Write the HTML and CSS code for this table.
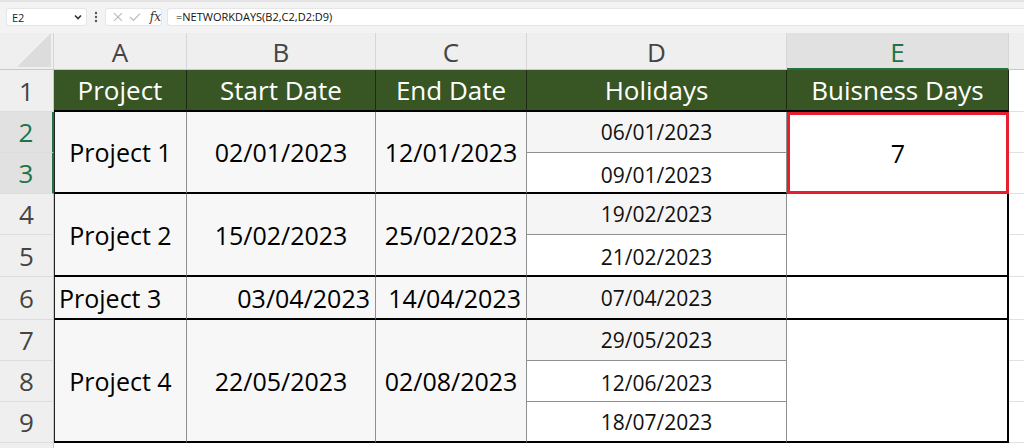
FILE: index.html
```html
<!DOCTYPE html>
<html>
<head>
<meta charset="utf-8">
<link rel="stylesheet" href="styles.css">
</head>
<body>
<div class="app">
  <div class="fbar">
    <div class="namebox">
      <span>E2</span>
      <svg class="chev" width="8" height="6" viewBox="0 0 8 6"><path d="M1 1.5 L4 4.5 L7 1.5" fill="none" stroke="#333" stroke-width="1.6"/></svg>
    </div>
    <div class="dots">
      <svg width="4" height="12" viewBox="0 0 4 12"><circle cx="2" cy="2" r="1.2" fill="#555"/><circle cx="2" cy="6" r="1.2" fill="#555"/><circle cx="2" cy="10" r="1.2" fill="#555"/></svg>
    </div>
    <div class="btns">
      <svg width="10" height="10" viewBox="0 0 10 10"><path d="M1 1 L9 9 M9 1 L1 9" stroke="#b9b9b9" stroke-width="1.1" fill="none"/></svg>
      <svg width="12" height="10" viewBox="0 0 12 10"><path d="M1 5 L4.5 8.5 L11 1.5" stroke="#b9b9b9" stroke-width="1.1" fill="none"/></svg>
      <span class="fx">fx</span>
    </div>
    <div class="formula">=NETWORKDAYS(B2,C2,D2:D9)</div>
  </div>

  <div class="sheet">
    <div class="corner"><div class="tri"></div></div>
    <div class="ch">A</div>
    <div class="ch">B</div>
    <div class="ch">C</div>
    <div class="ch">D</div>
    <div class="ch ch-sel">E</div>
    <div class="ch ch-f"></div>

    <div class="rh">1</div>
    <div class="th">Project</div>
    <div class="th">Start Date</div>
    <div class="th">End Date</div>
    <div class="th">Holidays</div>
    <div class="th">Buisness Days</div>
    <div class="f"></div>

    <div class="rh rh-sel">2</div>
    <div class="c ca span2 tb">Project 1</div>
    <div class="c span2 tb">02/01/2023</div>
    <div class="c span2 tb">12/01/2023</div>
    <div class="c cd gray">06/01/2023</div>
    <div class="c ce span2 tb sel">7</div>
    <div class="f"></div>

    <div class="rh rh-sel">3</div>
    <div class="c cd white tb low">09/01/2023</div>
    <div class="f"></div>

    <div class="rh">4</div>
    <div class="c ca span2 tb">Project 2</div>
    <div class="c span2 tb">15/02/2023</div>
    <div class="c span2 tb">25/02/2023</div>
    <div class="c cd gray">19/02/2023</div>
    <div class="c ce span2 tb"></div>
    <div class="f"></div>

    <div class="rh">5</div>
    <div class="c cd white tb low">21/02/2023</div>
    <div class="f"></div>

    <div class="rh">6</div>
    <div class="c ca tb left">Project 3</div>
    <div class="c tb right">03/04/2023</div>
    <div class="c tb right">14/04/2023</div>
    <div class="c cd gray tb">07/04/2023</div>
    <div class="c ce tb"></div>
    <div class="f"></div>

    <div class="rh">7</div>
    <div class="c ca span3 tb">Project 4</div>
    <div class="c span3 tb">22/05/2023</div>
    <div class="c span3 tb">02/08/2023</div>
    <div class="c cd gray">29/05/2023</div>
    <div class="c ce span3 tb"></div>
    <div class="f"></div>

    <div class="rh">8</div>
    <div class="c cd white low">12/06/2023</div>
    <div class="f"></div>

    <div class="rh">9</div>
    <div class="c cd white tb">18/07/2023</div>
    <div class="f"></div>

    <div class="rh rh-last"></div>
    <div class="rest"></div>
  </div>
</div>
</body>
</html>
```
FILE: styles.css
```css
* { box-sizing: border-box; }
html, body { margin: 0; padding: 0; }
body { font-family: "Open Sans", "Noto Sans", sans-serif; background: #f3f3f3; }

.app { width: 1024px; height: 448px; overflow: hidden; background: #f3f3f3; }

.fbar {
  height: 33px;
  display: flex;
  align-items: flex-start;
  padding: 6px 0 0 6px;
  border-top: 2px solid #e4e4e4;
}
.namebox {
  width: 81px; height: 18px;
  background: #fff;
  border: 1px solid #e6e6e6;
  border-radius: 3px;
  display: flex; align-items: center; justify-content: space-between;
  padding: 0 4px 0 5px;
  font-size: 11px; color: #222;
}
.dots { width: 18px; height: 18px; display: flex; align-items: center; justify-content: center; }
.btns {
  width: 57px; height: 18px;
  background: #fff;
  border: 1px solid #e6e6e6;
  border-radius: 3px;
  display: flex; align-items: center;
  padding-left: 7px; gap: 6px;
}
.fx { font-family: "DejaVu Serif", "Liberation Serif", serif; font-style: italic; font-size: 12px; color: #333; margin-left: 3px; }
.formula {
  flex: 1; height: 18px; margin-left: 5px;
  background: #fff;
  border: 1px solid #e6e6e6; border-right: none;
  border-radius: 3px 0 0 3px;
  font-size: 11px; color: #111;
  padding-left: 8px; line-height: 16px;
}

.sheet {
  display: grid;
  grid-template-columns: 54px 133px 189px 151px 260px 222px 1fr;
  grid-template-rows: 37px 42px 41px 41px 41px 42px 43px 41px 41px 41px 1fr;
  height: 415px;
}

.corner { background: #efefef; border-right: 1px solid #d6d6d6; border-bottom: 1px solid #c8c8c8; position: relative; }
.tri { position: absolute; right: 2px; bottom: 2px; width: 34px; height: 34px; background: #dcdcdc; clip-path: polygon(100% 0, 100% 100%, 0 100%); }

.ch {
  background: #efefef;
  border-right: 1px solid #d6d6d6;
  border-bottom: 1px solid #c8c8c8;
  display: flex; align-items: center; justify-content: center;
  font-size: 26px; color: #444; padding-top: 2px;
}
.ch-sel { background: #e1e1e1; color: #217346; border-bottom: 2px solid #217346; }
.ch-f { border-right: none; }

.rh {
  background: #efefef;
  border-right: 1px solid #c8c8c8;
  border-bottom: 1px solid #dcdcdc;
  display: flex; align-items: center; justify-content: center;
  font-size: 26px; color: #444;
}
.rh-sel { background: #e1e1e1; color: #217346; border-right: 2px solid #217346; }
.rh-last { border-bottom: none; }

.th {
  background: #375623; color: #fff;
  border-right: 1px solid #1e2a15;
  border-bottom: 2px solid #000;
  display: flex; align-items: center; justify-content: center;
  font-size: 26px;
}

.f { background: #fff; border-bottom: 1px solid #e1e1e1; }

.c {
  background: #f7f7f7;
  border-right: 1px solid #8f8f8f;
  border-bottom: 1px solid #8f8f8f;
  display: flex; align-items: center; justify-content: center;
  font-size: 25px; color: #000;
}
.ca { border-left: 1px solid #222; }
.cd { font-size: 21px; color: #111; }
.low { padding-top: 4px; }
.gray { background: #f5f5f5; }
.white { background: #fff; }
.ce { background: #fff; border-right: 2px solid #000; }
.tb { border-bottom: 2px solid #000; }
.left { justify-content: flex-start; padding-left: 4px; }
.right { justify-content: flex-end; padding-right: 5px; }
.span2 { grid-row: span 2; }
.span3 { grid-row: span 3; }
.sel { border: 3px solid #e5202e; }

.rest { grid-column: 2 / 8; background: #fff; }
```
